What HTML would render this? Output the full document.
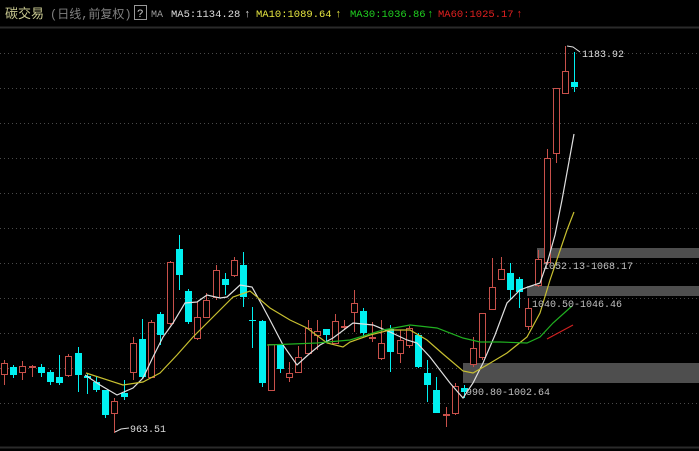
<!DOCTYPE html>
<html><head><meta charset="utf-8"><style>
html,body{margin:0;padding:0;background:#000;width:699px;height:451px;overflow:hidden}
svg{display:block}
text{font-family:"Liberation Mono","Noto Sans CJK SC",monospace}
</style></head><body>
<svg id="s" width="699" height="451" xmlns="http://www.w3.org/2000/svg">
<rect width="699" height="451" fill="#000"/>
<line x1="0" y1="27.5" x2="699" y2="27.5" stroke="#2a2a2a" stroke-width="2"/>
<line x1="0" y1="447.5" x2="699" y2="447.5" stroke="#2a2a2a" stroke-width="2"/>
<g stroke="#4a4a4a" stroke-width="1" stroke-dasharray="1,3">
<line x1="0" y1="53.5" x2="699" y2="53.5"/><line x1="0" y1="88.5" x2="699" y2="88.5"/>
<line x1="0" y1="123.5" x2="699" y2="123.5"/><line x1="0" y1="158.5" x2="699" y2="158.5"/>
<line x1="0" y1="193.5" x2="699" y2="193.5"/><line x1="0" y1="228.5" x2="699" y2="228.5"/>
<line x1="0" y1="263.5" x2="699" y2="263.5"/><line x1="0" y1="298.5" x2="699" y2="298.5"/>
<line x1="0" y1="333.5" x2="699" y2="333.5"/><line x1="0" y1="368.5" x2="699" y2="368.5"/>
<line x1="0" y1="403.5" x2="699" y2="403.5"/>
</g>
<text x="5" y="18" font-size="13" fill="#c8c890" font-family="'Liberation Sans','Noto Sans CJK SC',sans-serif">碳交易</text>
<text x="50" y="18" font-size="12" fill="#808080" font-family="'Liberation Sans','Noto Sans CJK SC',sans-serif">(日线,前复权)</text>
<rect x="134.5" y="5.5" width="12" height="14" fill="none" stroke="#999"/>
<text x="137" y="17" font-size="11" fill="#ccc">?</text>
<text x="151" y="17" font-size="10" fill="#999">MA</text>
<text x="171" y="17" font-size="10.5" fill="#ddd">MA5:1134.28</text>
<text x="244" y="17" font-size="11" fill="#ddd">↑</text>
<text x="256" y="17" font-size="10.5" fill="#e6e640">MA10:1089.64</text>
<text x="335" y="17" font-size="11" fill="#e6e640">↑</text>
<text x="350" y="17" font-size="10.5" fill="#20d020">MA30:1036.86</text>
<text x="427" y="17" font-size="11" fill="#20d020">↑</text>
<text x="438" y="17" font-size="10.5" fill="#e02020">MA60:1025.17</text>
<text x="516" y="17" font-size="11" fill="#e02020">↑</text>
<g id="zones" fill="#4e4e4e">
<rect x="537" y="248" width="162" height="10"/>
<rect x="527" y="286" width="172" height="10"/>
<rect x="463" y="363" width="236" height="20"/>
</g>
<g id="c"></g>
<g fill="none" stroke-width="1.2">
<polyline stroke="#e0e0e0" points="85,375 100,385 117,395 133,388 143,378 153,357 163,337 173,323 185,303 197,302 207,295 220,298 227,297 240,285 252,287 262,305 270,320 283,345 297,365 308,355 320,345 333,338 353,323 373,325 390,332 407,340 417,343 430,357 450,383 463,398 473,383 483,363 495,335 507,303 520,290 528,287 540,283 548,260 555,235 562,200 574,134"/>
<polyline stroke="#c8c030" points="86,373 123,385 143,382 160,373 177,355 193,337 213,317 233,297 250,291 270,308 290,320 307,328 327,343 343,347 350,342 370,335 390,330 410,330 427,340 443,354 463,371 473,373 487,365 507,353 527,337 540,313 550,280 567,230 574,212"/>
<polyline stroke="#20b020" points="267,345 317,343 350,340 383,330 410,325 437,328 463,338 480,342 500,342 527,343 540,337 553,323 572,306"/>
<polyline stroke="#d02020" points="547,339 573,325"/>
</g>
<g font-size="10" fill="#c0c0c0">
<text x="543" y="269">1052.13-1068.17</text>
<text x="532" y="307">1040.50-1046.46</text>
<text x="466" y="395">990.80-1002.64</text>
<text x="130" y="432" fill="#ddd">963.51</text>
<text x="582" y="57" fill="#ddd">1183.92</text>
</g>
<polyline points="115,432 121,429 129,428" fill="none" stroke="#ddd"/>
<polyline points="567,46 573,47 580,52" fill="none" stroke="#ddd"/>
</svg>
<script>
var d=[
['r',363,374,360,385],['c',367,375,365,378],['r',366,372,361,380],['r',366,367,365,377],['c',367,373,364,377],
['c',372,382,370,385],['c',377,383,355,385],['r',356,375,354,377],['c',353,375,347,392],['c',376,378,373,394],
['c',382,390,377,392],['c',390,415,390,418],['r',401,413,398,433],['c',393,397,380,400],['r',343,372,337,380],
['c',339,377,319,378],['r',322,377,320,378],['c',314,335,312,345],['r',262,323,261,325],['c',249,275,235,290],
['c',291,322,289,324],['r',317,338,302,340],['r',300,317,293,317],['r',270,297,265,300],['c',279,285,273,295],
['r',260,275,257,277],['c',265,297,252,307],['c',320,321,307,348],['c',321,383,320,387],['r',344,390,344,390],
['c',344,369,344,373],['r',373,377,362,382],['r',357,372,346,373],['r',328,353,320,355],['r',331,335,320,350],
['c',329,335,329,343],['r',321,343,314,343],['r',326,327,320,330],['r',303,312,290,332],['c',311,333,308,337],
['r',337,338,322,342],['r',343,358,320,360],['c',329,352,325,372],['r',340,353,330,363],['r',328,345,326,348],
['c',335,367,333,368],['c',373,385,360,402],['c',390,413,377,413],['r',414,415,407,427],['r',386,413,383,415],
['c',388,392,385,398],['r',348,364,337,367],['r',313,357,313,360],['r',287,309,258,309],['r',269,279,257,280],
['c',273,290,263,300],['c',279,292,277,308],['r',308,326,298,330],['r',259,285,250,287],['r',158,262,149,265],
['r',88,153,88,163],['r',71,93,46,93],['c',82,87,52,92]];
var h='';
d.forEach(function(a,i){
 var x=Math.round(4+i*9.2);var col=a[0]=='r'?'#c8504a':'#00f0f0';
 h+='<line x1="'+(x+.5)+'" y1="'+a[3]+'" x2="'+(x+.5)+'" y2="'+a[4]+'" stroke="'+col+'"/>';
 var bh=Math.max(a[2]-a[1],1);
 if(a[0]=='r') h+='<rect x="'+(x-2.5)+'" y="'+(a[1]+.5)+'" width="6" height="'+bh+'" fill="#000" stroke="'+col+'"/>';
 else h+='<rect x="'+(x-3)+'" y="'+a[1]+'" width="7" height="'+bh+'" fill="'+col+'"/>';
});
document.getElementById('c').innerHTML=h;
</script>
</body></html>
